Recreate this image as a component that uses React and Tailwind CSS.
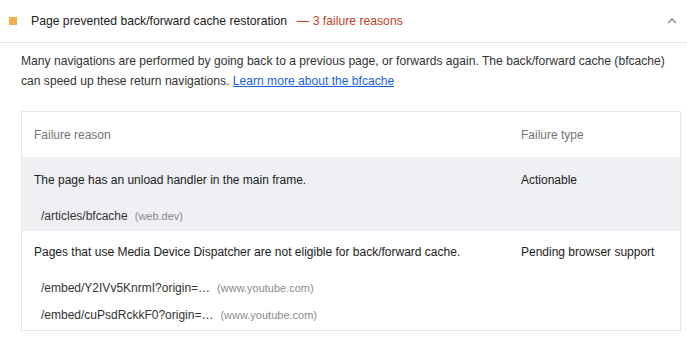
import React from "react"

const rows = [
  {
    reason: "The page has an unload handler in the main frame.",
    type: "Actionable",
    shaded: true,
    pt: "pt-[13px]",
    items: [{ url: "/articles/bfcache", host: "(web.dev)" }],
  },
  {
    reason: "Pages that use Media Device Dispatcher are not eligible for back/forward cache.",
    type: "Pending browser support",
    shaded: false,
    pt: "pt-[11px]",
    items: [
      { url: "/embed/Y2IVv5KnrmI?origin=…", host: "(www.youtube.com)" },
      { url: "/embed/cuPsdRckkF0?origin=…", host: "(www.youtube.com)" },
    ],
  },
]

export default function App() {
  return (
    <div className="w-[687px] h-[346px] bg-white font-['Liberation_Sans',Arial,sans-serif] text-[#212121] overflow-hidden">
      <div className="h-[43px] flex items-center border-b border-[#e8e8e8] pl-[9px] pr-[8px]">
        <span className="w-[8px] h-[8px] bg-[#f4b04d] shrink-0" />
        <span className="ml-[14px] text-[12.2px]">Page prevented back/forward cache restoration</span>
        <span className="ml-[10px] text-[12.2px] text-[#c5401e]">— 3 failure reasons</span>
        <svg className="ml-auto mr-[1px]" width="12" height="8" viewBox="0 0 12 8">
          <polyline points="2,6 6,2 10,6" fill="none" stroke="#8a8a8a" strokeWidth="1.4" />
        </svg>
      </div>

      <div className="pl-[21px] pr-[6px] pt-[8px]">
        <p className="text-[12.1px] leading-[20px] text-[#333] w-[650px]">
          Many navigations are performed by going back to a previous page, or forwards again. The back/forward cache (bfcache) can speed up these return navigations.{" "}
          <a href="#" className="text-[#1a5fe0] underline">Learn more about the bfcache</a>
        </p>

        <div className="mt-[20px] border border-[#e6e6e6] text-[12px]">
          <div className="flex h-[45px] items-center text-[#757575]">
            <div className="w-[487px] pl-[12px]">Failure reason</div>
            <div className="flex-1 pl-[12px]">Failure type</div>
          </div>
          {rows.map((r, i) => (
            <div key={i} className={`flex pb-[5px] ${r.pt} ${r.shaded ? "bg-[#eff0f4]" : "bg-white"}`}>
              <div className="w-[487px] pl-[12px]">
                <div className="leading-[20px] text-[#212121]">{r.reason}</div>
                <div className="mt-[16px] flex flex-col gap-[7px] pl-[7px]">
                  {r.items.map((it, j) => (
                    <div key={j} className="leading-[20px] text-[12px] text-[#333]">
                      {it.url}
                      <span className="ml-[7px] text-[11px] text-[#8a8a8a]">{it.host}</span>
                    </div>
                  ))}
                </div>
              </div>
              <div className="flex-1 pl-[12px] leading-[20px] text-[#212121]">{r.type}</div>
            </div>
          ))}
        </div>
      </div>
    </div>
  )
}
